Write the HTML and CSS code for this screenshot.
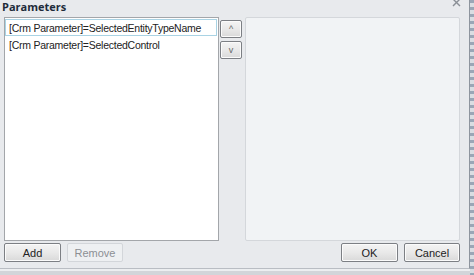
FILE: index.html
```html
<!DOCTYPE html>
<html lang="en">

<head>
    <meta charset="UTF-8">
    <meta name="viewport" content="width=device-width, initial-scale=1.0">
    <title>Parameters</title>
    <link rel="stylesheet" href="styles.css">
</head>

<body>
    <div class="dialog">
        <div class="titlebar">
            <span class="title">Parameters</span>
            <svg class="close" width="10" height="8" viewBox="0 0 10 8">
                <path d="M1 -1 L8 6 M8 -1 L1 6" stroke="#8a8f96" stroke-width="1.4" fill="none" />
            </svg>
        </div>
        <div class="main">
            <div class="list">
                <div class="item selected">[Crm Parameter]=SelectedEntityTypeName</div>
                <div class="item">[Crm Parameter]=SelectedControl</div>
            </div>
            <div class="arrows">
                <button class="btn arrow">^</button>
                <button class="btn arrow">v</button>
            </div>
            <div class="panel"></div>
        </div>
        <div class="footer">
            <button class="btn">Add</button>
            <button class="btn disabled">Remove</button>
            <span class="spacer"></span>
            <button class="btn">OK</button>
            <button class="btn">Cancel</button>
        </div>
    </div>
</body>

</html>
```

FILE: styles.css
```css
html,
body {
    margin: 0;
    width: 474px;
    height: 275px;
    overflow: hidden;
}

body {
    font-family: "Liberation Sans", "Open Sans", sans-serif;
    /* the window behind the dialog: a striped strip on the right */
    background:
        repeating-linear-gradient(180deg, #9aa6b6 0, #9aa6b6 3px, #d9dde2 3px, #d9dde2 7px) right top / 4px 100% no-repeat,
        #d2d5d9;
}

.dialog {
    width: 470px;
    height: 269px;
    box-sizing: border-box;
    padding: 0 9px 0 4px;
    background: #e8eaed;
    border-right: 1px solid #8e959e;
    border-bottom: 1px solid #b9bdc3;
    display: flex;
    flex-direction: column;
    box-shadow: 0 2px 0 #eceef0;
}

.titlebar {
    height: 17px;
    display: flex;
    justify-content: space-between;
}

.title {
    margin: 0 0 0 -2px;
    line-height: 14px;
    font-family: "Open Sans", "Liberation Sans", sans-serif;
    font-size: 11px;
    font-weight: bold;
    color: #1e2a3a;
}

.close {
    margin-right: -2px;
}

.main {
    height: 224px;
    display: flex;
}

.list {
    width: 216px;
    box-sizing: border-box;
    border: 1px solid #a3a6aa;
    background: #fff;
    padding: 1px 1px 0 0;
}

.item {
    height: 17px;
    line-height: 16px;
    box-sizing: border-box;
    padding-left: 3px;
    border: 1px solid transparent;
    font-size: 10.5px;
    letter-spacing: -0.25px;
    color: #222;
    white-space: nowrap;
}

.item.selected {
    border-color: #a9d3e4;
}

.arrows {
    width: 22px;
    margin-left: 1px;
    padding-top: 3px;
    display: flex;
    flex-direction: column;
    gap: 3px;
}

.btn {
    height: 19px;
    padding: 0;
    border: 1px solid #7c7f84;
    border-radius: 2px;
    background: linear-gradient(#f4f4f4, #e9e9e9 50%, #d9d9d9);
    box-shadow: inset 0 0 0 1px #fbfbfb;
    font-family: "Liberation Sans", "Open Sans", sans-serif;
    font-size: 11px;
    color: #222;
    width: 57px;
}

.btn.arrow {
    width: 22px;
    height: 18px;
    font-size: 9px;
    color: #666;
}

.btn.disabled {
    width: 56px;
    margin-left: 6px;
    border-color: #d3d6da;
    background: #eef0f2;
    box-shadow: none;
    color: #8c8f94;
}

.panel {
    width: 216px;
    height: 224px;
    margin-left: 3px;
    box-sizing: border-box;
    border: 1px solid #d4d7db;
    border-radius: 2px;
    background: #f1f3f5;
}

.footer {
    margin-top: 2px;
    display: flex;
}

.spacer {
    flex: 1;
}

.footer .btn + .btn {
    margin-left: 6px;
}

.footer .btn:last-child {
    width: 56px;
}
```
